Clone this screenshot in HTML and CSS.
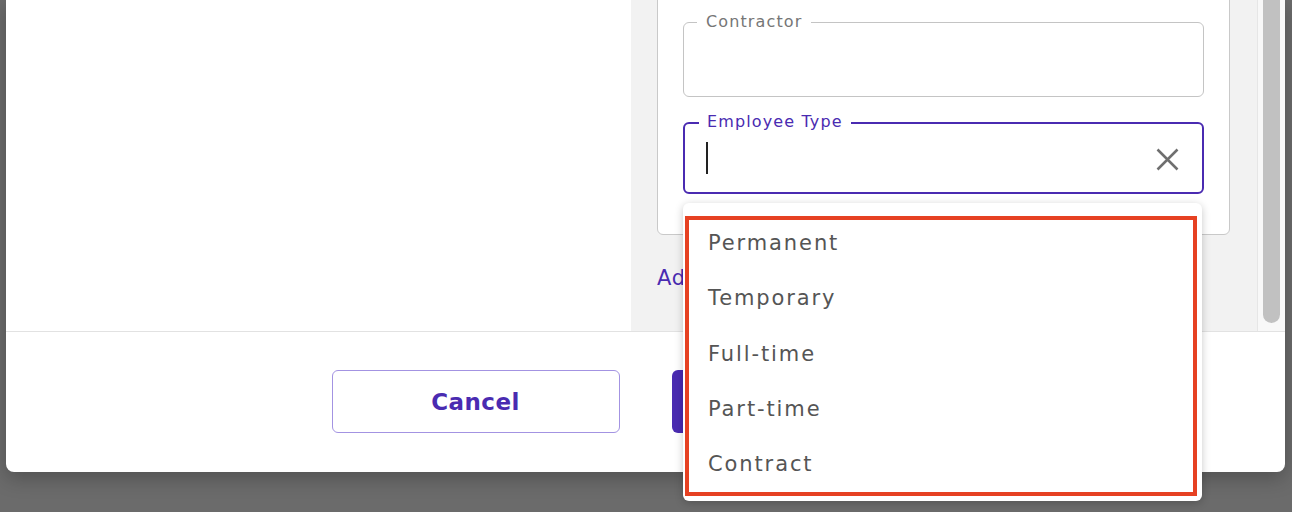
FILE: index.html
```html
<!DOCTYPE html>
<html lang="en">
<head>
    <meta charset="UTF-8">
    <meta name="viewport" content="width=device-width, initial-scale=1.0">
    <title>Edit Employee</title>
    <link rel="stylesheet" href="styles.css">
</head>
<body>
    <div class="modal">
        <div class="modal-body">
            <!-- left column (empty preview area) -->
            <div class="left-pane"></div>

            <!-- right column: scrolled form -->
            <div class="form-pane">
                <div class="form-card">
                    <div class="field">
                        <span class="field-label">Contractor</span>
                    </div>

                    <div class="field field-active">
                        <span class="field-label">Employee Type</span>
                        <span class="caret"></span>
                        <button class="clear-btn" title="Clear">
                            <svg width="23" height="23" viewBox="0 0 23 23">
                                <path d="M1.5 1.5 L21.5 21.5 M21.5 1.5 L1.5 21.5" stroke="#6f6f6f" stroke-width="2.5" fill="none"/>
                            </svg>
                        </button>

                        <!-- options popup -->
                        <div class="dropdown">
                            <ul class="options">
                                <li>Permanent</li>
                                <li>Temporary</li>
                                <li>Full-time</li>
                                <li>Part-time</li>
                                <li>Contract</li>
                            </ul>
                        </div>
                    </div>
                </div>
                <a class="add-link" href="#">Add</a>
            </div>

            <div class="scroll-track">
                <div class="scroll-thumb"></div>
            </div>
        </div>

        <div class="modal-footer">
            <button class="btn btn-outline">Cancel</button>
            <button class="btn btn-primary" aria-label="Save"></button>
        </div>
    </div>
</body>
</html>
```

FILE: styles.css
```css
* {
    box-sizing: border-box;
    margin: 0;
    padding: 0;
}

body {
    font-family: 'DejaVu Sans', 'Noto Sans', sans-serif;
    background-color: #6b6b6b;
    width: 1292px;
    height: 512px;
    overflow: hidden;
    padding: 0 7px 0 6px;
}

.modal {
    background: white;
    height: 472px;
    border-radius: 0 0 8px 8px;
    box-shadow: 0 6px 20px rgba(0,0,0,0.25);
    display: flex;
    flex-direction: column;
}

.modal-body {
    height: 332px;
    display: flex;
    border-bottom: 1px solid #e2e2e2;
}

.left-pane {
    width: 625px;
}

/* 表单区域 */
.form-pane {
    width: 626px;
    background: #f2f2f2;
    padding: 0 27px 0 26px;
}

.form-card {
    background: white;
    border: 1px solid #c9c9c9;
    border-radius: 6px;
    margin-top: -30px;
    padding: 51px 25px 40px 25px;
}

.field {
    position: relative;
    height: 75px;
    border: 1px solid #c4c4c4;
    border-radius: 6px;
}

.field-label {
    position: absolute;
    top: -11px;
    left: 13px;
    padding: 0 9px;
    background: white;
    font-size: 16px;
    line-height: 20px;
    letter-spacing: 0.07em;
    color: #767676;
}

.field-active {
    height: 72px;
    margin-top: 25px;
    border: 2px solid #4a2bb1;
    display: flex;
    align-items: center;
    padding: 2px 23px 0 21px;
}

.field-active .field-label {
    top: -12px;
    left: 14px;
    padding: 0 8px;
    color: #4a2bb1;
}

.caret {
    width: 2px;
    height: 32px;
    margin-top: -2px;
    background: #222;
}

.clear-btn {
    margin-left: auto;
    background: none;
    border: none;
    display: flex;
    cursor: pointer;
}

/* 下拉选项 */
.dropdown {
    position: absolute;
    top: 79px;
    left: -2px;
    width: 519px;
    height: 298px;
    background: white;
    border-radius: 6px;
    box-shadow: 0 2px 8px rgba(0,0,0,0.22);
    padding: 13px 5px 5px 2px;
    z-index: 10;
}

.options {
    list-style: none;
    height: 100%;
    border: 4px solid #e64122;
    padding: 0 0 0 19px;
}

.options li {
    height: 55.3px;
    line-height: 46px;
    font-size: 21px;
    letter-spacing: 0.09em;
    color: #555;
}

.add-link {
    display: block;
    margin-top: 31px;
    font-size: 21px;
    color: #4a2bb1;
    text-decoration: none;
    letter-spacing: 0.03em;
}

/* 滚动条 */
.scroll-track {
    width: 28px;
    background: #f8f8f8;
    border-left: 1px solid #e6e6e6;
    padding: 0 5px;
}

.scroll-thumb {
    margin-top: -20px;
    height: 343px;
    background: #c1c1c1;
    border-radius: 9px;
}

/* 底部按钮 */
.modal-footer {
    flex: 1;
    display: flex;
    justify-content: center;
    gap: 52px;
    padding-top: 38px;
}

.btn {
    width: 288px;
    height: 63px;
    border-radius: 6px;
    font-family: inherit;
    font-size: 23px;
    font-weight: bold;
    letter-spacing: 0.02em;
    cursor: pointer;
}

.btn-outline {
    background: white;
    color: #4a2bb1;
    border: 1px solid #a393e2;
}

.btn-primary {
    background: #4a2bb1;
    color: white;
    border: none;
}
```
